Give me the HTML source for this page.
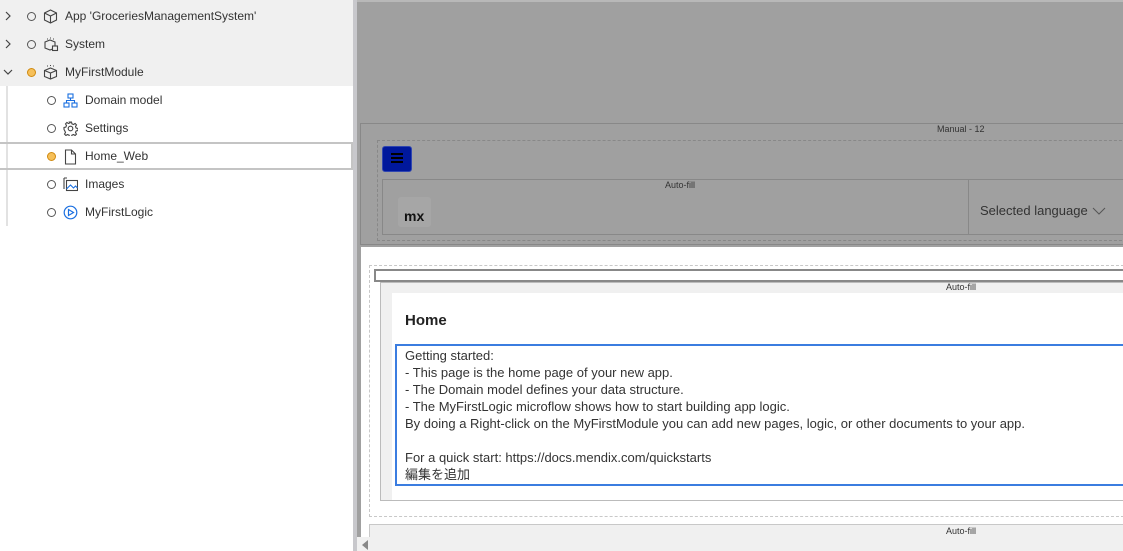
<!DOCTYPE html>
<html><head><meta charset="utf-8"><style>
*{margin:0;padding:0;box-sizing:border-box}
body{width:1123px;height:551px;overflow:hidden;position:relative;background:#fff;font-family:"Liberation Sans","Noto Sans CJK JP",sans-serif;color:#333}
.a{position:absolute}
.row{position:absolute;left:0;width:353px;height:28px;font-size:12px;line-height:28px;color:#333}
.circ{position:absolute;top:10px;width:9px;height:9px;border:1.3px solid #555;border-radius:50%}
.circ.o{background:#f6c05a;border-color:#d08a10}
.ic{position:absolute;top:7px}
.lbl{position:absolute;font-size:9px;color:#333}
</style></head><body>
<div class="a" style="left:0;top:0;width:353px;height:86px;background:#f0f0f0"></div>
<div class="a" style="left:6px;top:86px;width:2px;height:140px;background:#e2e2e2"></div>
<div class="a" style="left:353px;top:0;width:4px;height:551px;background:#c8c8cc"></div>

<div class="row" style="top:2px">
 <svg class="ic" style="left:3px;top:9px" width="10" height="10"><path d="M3 1l4 4-4 4" fill="none" stroke="#444" stroke-width="1.2"/></svg>
 <div class="circ" style="left:27px"></div>
 <svg class="ic" style="left:43px" width="15" height="15" fill="none" stroke="#444" stroke-width="1.1"><path d="M7.5 1l6 3v7l-6 3-6-3V4z M1.5 4l6 3 6-3 M7.5 7v7"/></svg>
 <span style="position:absolute;left:65px">App 'GroceriesManagementSystem'</span></div>
<div class="row" style="top:30px">
 <svg class="ic" style="left:3px;top:9px" width="10" height="10"><path d="M3 1l4 4-4 4" fill="none" stroke="#444" stroke-width="1.2"/></svg>
 <div class="circ" style="left:27px"></div>
 <svg class="ic" style="left:43px" width="16" height="15" fill="none" stroke="#444" stroke-width="1.1"><path d="M2 5l5-2 5 2v6l-5 2-5-2z M4 2h1M7 1h1M10 2h1"/><rect x="9.5" y="9" width="5" height="4.5" fill="#f0f0f0"/></svg>
 <span style="position:absolute;left:65px">System</span></div>
<div class="row" style="top:58px">
 <svg class="ic" style="left:3px;top:9px" width="10" height="10"><path d="M1 3l4 4 4-4" fill="none" stroke="#444" stroke-width="1.2"/></svg>
 <div class="circ o" style="left:27px"></div>
 <svg class="ic" style="left:43px" width="15" height="15" fill="none" stroke="#444" stroke-width="1.1"><path d="M7.5 3l6 2.5v6l-6 2.5-6-2.5v-6z M1.5 5.5l6 2.5 6-2.5 M7.5 8v6 M4 1h1M7 0.5h1M10 1h1"/></svg>
 <span style="position:absolute;left:65px">MyFirstModule</span></div>

<div class="row" style="top:86px">
 <div class="circ" style="left:47px"></div>
 <svg class="ic" style="left:63px" width="15" height="15" fill="none" stroke="#1a6fe0" stroke-width="1.1"><rect x="5" y="1" width="5" height="4"/><rect x="1" y="10" width="5" height="4"/><rect x="9" y="10" width="5" height="4"/><path d="M7.5 5v2.5M3.5 10V7.5h8V10"/></svg>
 <span style="position:absolute;left:85px">Domain model</span></div>
<div class="row" style="top:114px">
 <div class="circ" style="left:47px"></div>
 <svg class="ic" style="left:63px" width="15" height="15" fill="none" stroke="#444" stroke-width="1.1"><circle cx="7.5" cy="7.5" r="2.3"/><path d="M6.5 1h2l.4 1.8 1.6.7 1.6-1 1.4 1.4-1 1.6.7 1.6 1.8.4v2l-1.8.4-.7 1.6 1 1.6-1.4 1.4-1.6-1-1.6.7-.4 1.8h-2l-.4-1.8-1.6-.7-1.6 1-1.4-1.4 1-1.6-.7-1.6L1 8.5v-2l1.8-.4.7-1.6-1-1.6 1.4-1.4 1.6 1 1.6-.7z"/></svg>
 <span style="position:absolute;left:85px">Settings</span></div>
<div class="a" style="left:-2px;top:142px;width:355px;height:28px;border:2px solid #c4c4c4"></div>
<div class="row" style="top:142px">
 <div class="circ o" style="left:47px"></div>
 <svg class="ic" style="left:63px" width="15" height="16" fill="none" stroke="#444" stroke-width="1.1"><path d="M2.5 1h6l4 4v10h-10z M8.5 1v4h4"/></svg>
 <span style="position:absolute;left:85px">Home_Web</span></div>
<div class="row" style="top:170px">
 <div class="circ" style="left:47px"></div>
 <svg class="ic" style="left:63px" width="15" height="15" fill="none" stroke="#444" stroke-width="1.1"><path d="M1 1h3M1 1v11"/><rect x="3.5" y="3.5" width="11" height="10"/><path d="M3.5 12l4-4 3 3 2-2 2 2" stroke="#1a6fe0"/></svg>
 <span style="position:absolute;left:85px">Images</span></div>
<div class="row" style="top:198px">
 <div class="circ" style="left:47px"></div>
 <svg class="ic" style="left:63px" width="15" height="15" fill="none" stroke="#1a6fe0" stroke-width="1.2"><circle cx="7.5" cy="7.5" r="6.3"/><path d="M5.5 4.5v6l5-3z"/></svg>
 <span style="position:absolute;left:85px">MyFirstLogic</span></div>

<div class="a" style="left:357px;top:0;width:766px;height:247px;background:#a0a0a0;border-top:2px solid #b8b8b8"></div>
<div class="a" style="left:360px;top:123px;width:770px;height:122px;border:1px solid #888"></div>
<div class="lbl" style="left:937px;top:124px">Manual - 12</div>
<div class="a" style="left:377px;top:140px;width:760px;height:101px;border:1px dashed #888"></div>
<div class="a" style="left:382px;top:146px;width:30px;height:26px;background:#00189c;border-radius:3px;border:1px solid #3046b0"></div>
<div class="a" style="left:391px;top:153px;width:12px;height:2px;background:#000;box-shadow:0 4px 0 #000,0 8px 0 #000"></div>
<div class="a" style="left:382px;top:179px;width:750px;height:56px;border:1px solid #888"></div>
<div class="lbl" style="left:665px;top:180px">Auto-fill</div>
<div class="a" style="left:398px;top:197px;width:33px;height:30px;background:#a6a6a6;border-radius:3px"></div>
<div class="a" style="left:404px;top:208px;font-size:14px;font-weight:bold;color:#111">mx</div>
<div class="a" style="left:968px;top:180px;width:1px;height:54px;background:#888"></div>
<div class="a" style="left:980px;top:203px;font-size:13px;color:#333">Selected language</div>
<svg class="a" style="left:1092px;top:207px" width="14" height="9"><path d="M1 1l6 6 6-6" fill="none" stroke="#555" stroke-width="1"/></svg>

<div class="a" style="left:357px;top:247px;width:4px;height:290px;background:#a0a0a0"></div>
<div class="a" style="left:369px;top:265px;width:760px;height:252px;border:1px dashed #c8c8c8"></div>
<div class="a" style="left:374px;top:269px;width:760px;height:13px;border:2px solid #888;border-right:none"></div>
<div class="a" style="left:380px;top:282px;width:750px;height:219px;border:1px solid #bbb;background:#f0f0f0"></div>
<div class="lbl" style="left:946px;top:282px">Auto-fill</div>
<div class="a" style="left:392px;top:293px;width:740px;height:207px;background:#fff"></div>
<div class="a" style="left:405px;top:312px;font-size:15px;font-weight:bold;color:#222">Home</div>
<div class="a" style="left:395px;top:344px;width:740px;height:142px;border:2px solid #3b7de0"></div>
<div class="a" style="left:405px;top:347px;font-size:13px;line-height:17px;color:#333;white-space:pre">Getting started:
- This page is the home page of your new app.
- The Domain model defines your data structure.
- The MyFirstLogic microflow shows how to start building app logic.
By doing a Right-click on the MyFirstModule you can add new pages, logic, or other documents to your app.

For a quick start: https://docs.mendix.com/quickstarts
編集を追加</div>
<div class="a" style="left:369px;top:524px;width:760px;height:20px;border:1px solid #c8c8c8;background:#f0f0f0"></div>
<div class="lbl" style="left:946px;top:526px">Auto-fill</div>
<div class="a" style="left:357px;top:537px;width:766px;height:14px;background:#f0f0f0"></div>
<svg class="a" style="left:361px;top:540px" width="8" height="10"><path d="M7 0v10L1 5z" fill="#888"/></svg>
</body></html>
